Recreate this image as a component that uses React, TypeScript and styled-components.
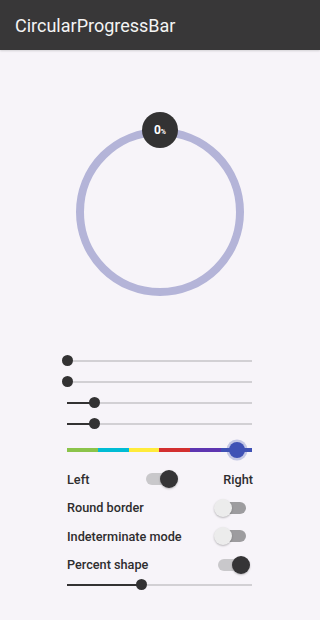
import styled, { createGlobalStyle } from "styled-components";

const Global = createGlobalStyle`
  html, body {
    margin: 0;
    padding: 0;
    background: #f7f4f9;
  }
  body {
    font-family: Roboto, "Noto Sans", "Liberation Sans", sans-serif;
  }
`;

const Screen = styled.div`
  width: 320px;
  height: 620px;
  background: #f7f4f9;
  display: flex;
  flex-direction: column;
  overflow: hidden;
`;

const AppBar = styled.header`
  height: 50px;
  background: #383738;
  display: flex;
  align-items: center;
  padding-left: 15px;
  color: #f4f4f4;
  font-size: 18px;
  font-weight: 400;
  box-shadow: 0 1px 2px rgba(0, 0, 0, 0.15);
`;

const Stage = styled.div`
  position: relative;
  width: 168px;
  height: 168px;
  margin: 78px auto 0;
`;

const Badge = styled.div`
  position: absolute;
  top: -16px;
  left: 66px;
  width: 36px;
  height: 36px;
  border-radius: 50%;
  background: #333233;
  color: #ffffff;
  display: flex;
  align-items: center;
  justify-content: center;
  font-size: 12px;
  font-weight: 700;
`;

const Pct = styled.span`
  font-size: 7px;
  font-weight: 700;
  margin-top: 3px;
`;

const Controls = styled.div`
  margin-top: 54px;
  margin-left: 67px;
  width: 186px;
  display: flex;
  flex-direction: column;
`;

const SliderRow = styled.div<{ $h: number }>`
  height: ${(p) => p.$h}px;
  display: flex;
  align-items: center;
`;

const Track = styled.div`
  position: relative;
  width: 185px;
  height: 2px;
  background: #d2d0d4;
`;

const Fill = styled.div`
  height: 2px;
  background: #333233;
`;

const Thumb = styled.div`
  position: absolute;
  top: 50%;
  width: 11px;
  height: 11px;
  margin: -5.5px 0 0 -5.5px;
  border-radius: 50%;
  background: #333233;
`;

const Rainbow = styled.div`
  position: relative;
  width: 185px;
  height: 4px;
  display: flex;
`;

const Segment = styled.div<{ $c: string }>`
  flex: 1;
  background: ${(p) => p.$c};
`;

const ColorThumb = styled.div`
  position: absolute;
  top: 50%;
  width: 16px;
  height: 16px;
  margin: -8px 0 0 -8px;
  border-radius: 50%;
  background: #3f51b5;
  box-shadow: 0 0 0 2.5px rgba(63, 81, 181, 0.28);
`;

const SideRow = styled.div`
  height: 28.5px;
  display: grid;
  grid-template-columns: 1fr auto 1fr;
  align-items: center;
  & > :last-child {
    justify-self: end;
  }
`;

const ToggleRow = styled.div`
  height: 28.5px;
  display: flex;
  align-items: center;
  justify-content: space-between;
  padding-right: 3px;
`;

const Label = styled.span`
  font-size: 12.7px;
  font-weight: 500;
  color: #2e2d2f;
`;

const SwitchBox = styled.div`
  position: relative;
  width: 36px;
  height: 20px;
`;

const SwitchTrack = styled.div<{ $on: boolean }>`
  position: absolute;
  left: 4px;
  top: 4px;
  width: 28px;
  height: 12px;
  border-radius: 6px;
  background: ${(p) => (p.$on ? "#c9c8cb" : "#9d9c9f")};
`;

const SwitchThumb = styled.div<{ $on: boolean }>`
  position: absolute;
  top: 1px;
  left: ${(p) => (p.$on ? 18 : 0)}px;
  width: 18px;
  height: 18px;
  border-radius: 50%;
  background: ${(p) => (p.$on ? "#353436" : "#ececec")};
  box-shadow: 0 1px 2px rgba(0, 0, 0, 0.25);
`;

const Slider = ({ value, h }: { value: number; h: number }) => (
  <SliderRow $h={h}>
    <Track>
      <Fill style={{ width: `${value * 100}%` }} />
      <Thumb style={{ left: `${value * 100}%` }} />
    </Track>
  </SliderRow>
);

const Switch = ({ on }: { on: boolean }) => (
  <SwitchBox>
    <SwitchTrack $on={on} />
    <SwitchThumb $on={on} />
  </SwitchBox>
);

const colors = ["#8bc34a", "#00bcd4", "#ffeb3b", "#d32f2f", "#5e35b1", "#3f51b5"];

export default function App() {
  return (
    <Screen>
      <Global />
      <AppBar>CircularProgressBar</AppBar>
      <Stage>
        <svg width="168" height="168" viewBox="0 0 168 168">
          <circle cx="84" cy="84" r="80" fill="none" stroke="#b4b4d8" strokeWidth="8" />
        </svg>
        <Badge>
          0<Pct>%</Pct>
        </Badge>
      </Stage>
      <Controls>
        <Slider value={0} h={21} />
        <Slider value={0} h={21} />
        <Slider value={0.146} h={21} />
        <Slider value={0.146} h={21} />
        <SliderRow $h={31}>
          <Rainbow>
            {colors.map((c) => (
              <Segment key={c} $c={c} />
            ))}
            <ColorThumb style={{ left: "92%" }} />
          </Rainbow>
        </SliderRow>
        <SideRow>
          <Label>Left</Label>
          <Switch on />
          <Label>Right</Label>
        </SideRow>
        <ToggleRow>
          <Label>Round border</Label>
          <Switch on={false} />
        </ToggleRow>
        <ToggleRow>
          <Label>Indeterminate mode</Label>
          <Switch on={false} />
        </ToggleRow>
        <ToggleRow>
          <Label>Percent shape</Label>
          <Switch on />
        </ToggleRow>
        <Slider value={0.405} h={11} />
      </Controls>
    </Screen>
  );
}
